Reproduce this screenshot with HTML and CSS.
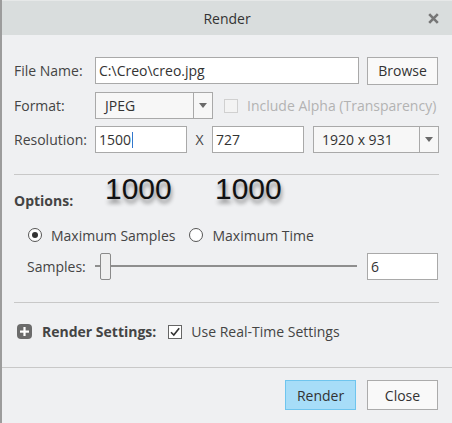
FILE: index.html
```html
<!DOCTYPE html>
<html lang="en">
<head>
    <meta charset="UTF-8">
    <meta name="viewport" content="width=device-width, initial-scale=1.0">
    <title>Render</title>
    <link rel="stylesheet" href="styles.css">
</head>
<body>
    <div class="dialog">
        <div class="title-bar">
            Render
            <svg class="close-x" width="11" height="11" viewBox="0 0 11 11">
                <path d="M1.2 1.2 L9.8 9.8 M9.8 1.2 L1.2 9.8" stroke="#767676" stroke-width="2.6" fill="none"/>
            </svg>
        </div>

        <div class="form">
            <div class="row row-file">
                <span class="label">File Name:</span>
                <div class="field wide">C:\Creo\creo.jpg</div>
                <button class="btn browse">Browse</button>
            </div>
            <div class="row row-format">
                <span class="label">Format:</span>
                <div class="select format-select">
                    <span class="select-text">JPEG</span>
                    <span class="select-arrow"><span class="tri"></span></span>
                </div>
                <span class="check disabled"></span>
                <span class="muted">Include Alpha (Transparency)</span>
            </div>
            <div class="row row-res">
                <span class="label">Resolution:</span>
                <div class="field small">1500<span class="caret"></span></div>
                <span class="times">X</span>
                <div class="field small">727</div>
                <div class="select res-select">
                    <span class="select-text">1920 x 931</span>
                    <span class="select-arrow"><span class="tri"></span></span>
                </div>
            </div>
        </div>

        <div class="sep"></div>

        <div class="options">
            <div class="options-title">Options:</div>
            <!-- annotation numbers drawn over the dialog -->
            <span class="big-num num-a">1000</span>
            <span class="big-num num-b">1000</span>
            <div class="radio-row">
                <span class="radio on"></span>
                <span class="radio-label">Maximum Samples</span>
                <span class="radio"></span>
                <span class="radio-label">Maximum Time</span>
            </div>
            <div class="samples-row">
                <span class="samples-label">Samples:</span>
                <div class="slider">
                    <div class="track"></div>
                    <div class="thumb"></div>
                </div>
                <div class="field samples-field">6</div>
            </div>
        </div>

        <div class="sep"></div>

        <div class="settings-row">
            <svg class="plus" width="15" height="15" viewBox="0 0 15 15">
                <rect x="0" y="0" width="15" height="15" rx="4" fill="#6b6b6b"/>
                <rect x="3" y="6.5" width="9" height="2.2" fill="#fff"/>
                <rect x="6.4" y="3" width="2.2" height="9" fill="#fff"/>
            </svg>
            <span class="settings-title">Render Settings:</span>
            <span class="check checked">
                <svg width="12" height="12" viewBox="0 0 12 12">
                    <path d="M2 6.2 L4.8 9 L10.2 2.2" fill="none" stroke="#333" stroke-width="1.6"/>
                </svg>
            </span>
            <span class="settings-label">Use Real-Time Settings</span>
        </div>

        <div class="footer">
            <button class="btn primary">Render</button>
            <button class="btn">Close</button>
        </div>
    </div>
</body>
</html>
```

FILE: styles.css
```css
body {
    margin: 0;
    padding: 0;
    font-family: "Open Sans", "Noto Sans", sans-serif;
    font-size: 14px;
    color: #3a3a3a;
}
.dialog {
    width: 450px;
    height: 423px;
    background-color: #eff0f2;
    border-left: 2px solid #9c9c9c;
    display: flex;
    flex-direction: column;
}
.title-bar {
    height: 35px;
    background-color: #d9dddd;
    border-top: 1px solid #e6e8e8;
    box-sizing: border-box;
    display: flex;
    align-items: center;
    justify-content: center;
    position: relative;
    font-size: 14px;
    color: #333;
}
.close-x {
    position: absolute;
    right: 13px;
    top: 12px;
}
.form {
    padding: 22px 0 0 12px;
}
.row {
    display: flex;
    align-items: center;
    height: 27px;
    margin-bottom: 7px;
}
.row-file {
    margin-bottom: 8px;
}
.label {
    width: 81px;
    color: #444;
}
.field {
    height: 27px;
    box-sizing: border-box;
    border: 1px solid #a9a9a9;
    background-color: #fff;
    padding-left: 3px;
    display: flex;
    align-items: center;
    color: #333;
}
.wide {
    width: 264px;
}
.small {
    width: 92px;
}
.caret {
    width: 1px;
    height: 16px;
    background-color: #3377cc;
    margin-left: 1px;
}
.times {
    width: 25px;
    text-align: center;
    color: #444;
}
.btn {
    height: 28px;
    box-sizing: border-box;
    border: 1px solid #ababab;
    background-color: #f9f9f9;
    font-family: "Open Sans", "Noto Sans", sans-serif;
    font-size: 14px;
    color: #333;
    padding: 0;
    width: 71px;
}
.browse {
    margin-left: 8px;
}
.select {
    height: 27px;
    box-sizing: border-box;
    border: 1px solid #a9a9a9;
    background-color: #f7f7f7;
    display: flex;
    align-items: stretch;
}
.select-text {
    flex: 1;
    display: flex;
    align-items: center;
    padding-left: 8px;
    color: #333;
}
.format-select {
    width: 118px;
}
.format-select .select-text {
    padding-left: 9px;
}
.res-select {
    width: 126px;
    margin-left: 9px;
}
.select-arrow {
    width: 18px;
    border-left: 1px solid #a9a9a9;
    display: flex;
    align-items: center;
    justify-content: center;
}
.tri {
    width: 0;
    height: 0;
    border-left: 4px solid transparent;
    border-right: 4px solid transparent;
    border-top: 5px solid #6a6a6a;
}
.check {
    width: 14px;
    height: 14px;
    box-sizing: border-box;
    border: 1px solid #666;
    background-color: #fff;
    display: flex;
    align-items: center;
    justify-content: center;
}
.check.disabled {
    border-color: #d0d0d0;
    background-color: #f3f3f3;
    margin-left: 11px;
}
.muted {
    color: #b3b3b3;
    margin-left: 9px;
}
.sep {
    height: 1px;
    background-color: #c8c8c8;
    margin: 0 13px 0 12px;
}
.form + .sep {
    margin-top: 14px;
}
.options {
    position: relative;
    height: 127px;
}
.options-title {
    font-weight: bold;
    color: #444;
    padding: 16px 0 0 12px;
    height: 20px;
}
.big-num {
    position: absolute;
    top: -3px;
    font-family: "Liberation Sans", Arial, sans-serif;
    font-size: 30px;
    color: #111;
    text-shadow: 1px 4px 4px rgba(0, 0, 0, 0.45);
}
.num-a {
    left: 103px;
}
.num-b {
    left: 213px;
}
.radio-row {
    display: flex;
    align-items: center;
    margin: 14px 0 0 26px;
    height: 20px;
}
.radio {
    width: 14px;
    height: 14px;
    box-sizing: border-box;
    border: 1px solid #555;
    border-radius: 50%;
    background-color: #fff;
    display: flex;
    align-items: center;
    justify-content: center;
    margin-right: 9px;
}
.radio.on::after {
    content: "";
    width: 6px;
    height: 6px;
    border-radius: 50%;
    background-color: #333;
}
.radio-label {
    color: #444;
    margin-right: 14px;
}
.samples-row {
    display: flex;
    align-items: center;
    margin: 8px 0 0 25px;
    height: 27px;
}
.samples-label {
    width: 68px;
    color: #444;
}
.slider {
    position: relative;
    width: 262px;
    height: 27px;
}
.track {
    position: absolute;
    left: 0;
    right: 0;
    top: 12px;
    height: 2px;
    background-color: #8e8e8e;
}
.thumb {
    position: absolute;
    left: 5px;
    top: 0;
    width: 11px;
    height: 27px;
    box-sizing: border-box;
    border: 1px solid #8a8a8a;
    border-radius: 2px;
    background-color: #efefef;
}
.samples-field {
    width: 71px;
    margin-left: 10px;
}
.settings-row {
    display: flex;
    align-items: center;
    height: 65px;
    box-sizing: border-box;
    padding: 0 0 7px 15px;
    border-bottom: 1px solid #c8c8c8;
}
.plus {
    margin-right: 10px;
}
.settings-title {
    font-weight: bold;
    color: #444;
    margin-right: 12px;
}
.settings-label {
    color: #444;
    margin-left: 9px;
}
.footer {
    display: flex;
    justify-content: flex-end;
    gap: 11px;
    padding: 12px 14px 0 0;
}
.footer .btn {
    height: 30px;
}
.primary {
    background-color: #a7ddf8;
    border-color: #6fc5ee;
}
```
